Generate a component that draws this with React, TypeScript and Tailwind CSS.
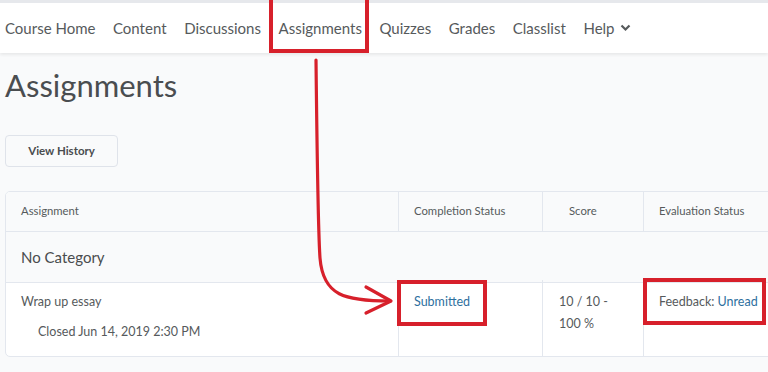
import React from "react";

export default function App() {
  const nav = ["Course Home", "Content", "Discussions", "Assignments", "Quizzes", "Grades", "Classlist"];
  return (
    <div className="relative w-[768px] h-[372px] overflow-hidden bg-[#f9fafb] font-['Lato','Noto_Sans',sans-serif] text-[#494c4e]">
      <nav className="h-[53px] bg-white border-t-[3px] border-[#e6e8ec] shadow-[0_2px_3px_rgba(0,0,0,0.07)] flex items-center pl-[5px] gap-[17.6px] text-[15px] text-[#565a5c]">
        {nav.map((n) => (
          <span key={n}>{n}</span>
        ))}
        <span className="flex items-center gap-[5px]">
          Help
          <svg width="11" height="8" viewBox="0 0 11 8">
            <path d="M1.5 1.5 L5.5 5.5 L9.5 1.5" fill="none" stroke="#565a5c" strokeWidth="2.2" />
          </svg>
        </span>
      </nav>
      <main className="pl-[5px]">
        <h1 className="mt-[12px] text-[31px] leading-[40px] text-[#4a4d50]">Assignments</h1>
        <button className="mt-[30px] w-[113px] h-[32px] rounded-[4px] border border-[#dfe3ea] bg-[#f9fafb] text-[11.5px] font-bold text-[#494c4e]">
          View History
        </button>
        <div className="mt-[24px] w-[820px] border border-[#e3e7ee] rounded-[5px] overflow-hidden bg-white">
          <div className="grid grid-cols-[392px_144px_101px_1fr] h-[40px] bg-[#f9fafb] border-b border-[#e3e7ee] text-[11.3px] text-[#565a5c]">
            <div className="flex items-center pl-[15px]">Assignment</div>
            <div className="flex items-center pl-[15px] border-l border-[#e3e7ee]">Completion Status</div>
            <div className="flex items-center pl-[26px] border-l border-[#e3e7ee]">Score</div>
            <div className="flex items-center pl-[15px] border-l border-[#e3e7ee]">Evaluation Status</div>
          </div>
          <div className="h-[51px] bg-[#f9fafb] border-b border-[#e3e7ee] flex items-center pl-[15px] text-[15px] text-[#494c4e]">
            No Category
          </div>
          <div className="grid grid-cols-[392px_144px_101px_1fr] h-[73px] text-[12.5px] text-[#565a5c]">
            <div className="pl-[15px] pt-[11px]">
              <div className="leading-[16px]">Wrap up essay</div>
              <div className="pl-[17px] mt-[14px] leading-[16px] text-[12.5px]">Closed Jun 14, 2019 2:30 PM</div>
            </div>
            <div className="pl-[15px] pt-[11px] border-l border-[#e3e7ee] leading-[16px] text-[#2e6f9e]">Submitted</div>
            <div className="pl-[16px] pt-[11px] border-l border-[#e3e7ee] leading-[22px] -mt-[3px]">
              <div>10 / 10 -</div>
              <div>100 %</div>
            </div>
            <div className="pl-[15px] pt-[11px] border-l border-[#e3e7ee] leading-[16px]">
              Feedback: <span className="text-[#2e6f9e]">Unread</span>
            </div>
          </div>
        </div>
      </main>
      <svg className="absolute inset-0 pointer-events-none" width="768" height="372" viewBox="0 0 768 372">
        <g fill="none" stroke="#d7202b" strokeWidth="4">
          <rect x="271" y="-4" width="96" height="55" />
          <rect x="399" y="282" width="86" height="42" />
          <rect x="645" y="280" width="119" height="43" />
        </g>
        <g fill="none" stroke="#d7202b" strokeWidth="3.2" strokeLinecap="round" strokeLinejoin="round">
          <path d="M316 60 C 317 150, 318 230, 320 258 C 323 296, 345 301, 390 301" />
          <path d="M366 287 L391 301 L366 313" />
        </g>
      </svg>
    </div>
  );
}
